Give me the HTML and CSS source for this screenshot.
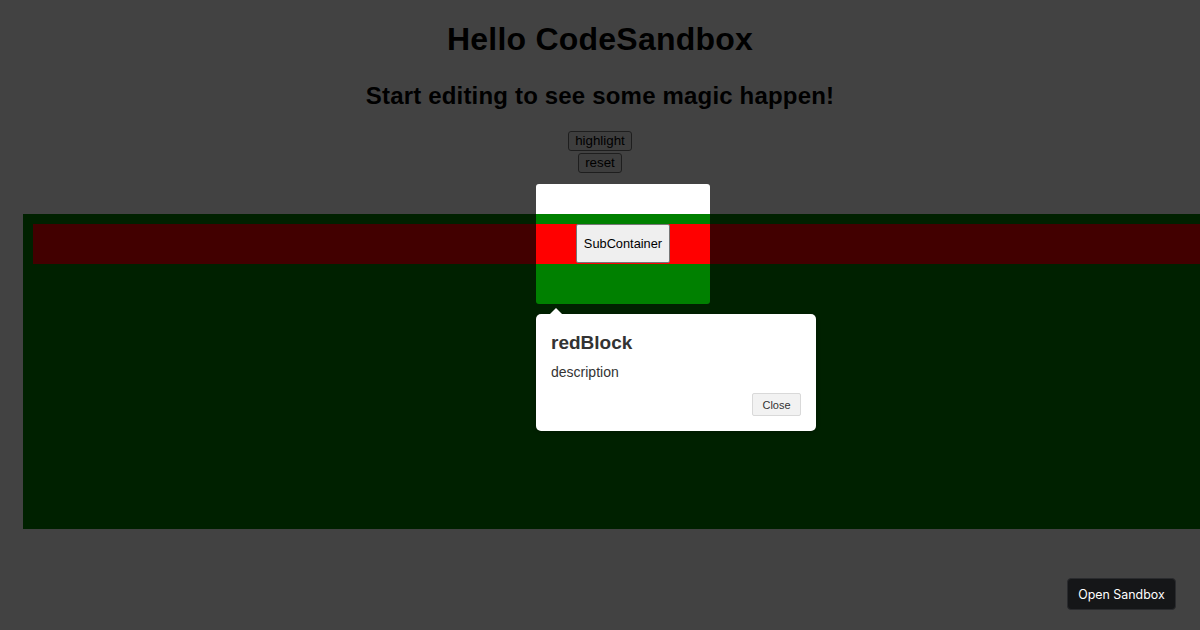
FILE: index.html
```html
<!DOCTYPE html>
<html>
<head>
<meta charset="utf-8">
<title>CodeSandbox</title>
<link rel="stylesheet" href="styles.css">
</head>
<body>
<div class="app">
  <h1 class="title">Hello CodeSandbox</h1>
  <h2 class="subtitle">Start editing to see some magic happen!</h2>
  <div class="controls">
    <button class="ctrl-btn">highlight</button>
    <button class="ctrl-btn">reset</button>
  </div>
  <div class="container">
    <div class="red-block">
      <button class="sub-btn">SubContainer</button>
    </div>
  </div>
</div>

<div class="spotlight"></div>

<div class="tooltip">
  <div class="tooltip-title">redBlock</div>
  <div class="tooltip-desc">description</div>
  <div class="tooltip-footer">
    <button class="close-btn">Close</button>
  </div>
</div>

<a class="open-sandbox">Open Sandbox</a>
</body>
</html>
```

FILE: styles.css
```css
html, body {
  overflow: hidden;
}
body {
  margin: 0;
  background: #ffffff;
  font-family: "Liberation Sans", Arial, sans-serif;
  color: #000;
}
.app {
  text-align: center;
}
.title {
  margin: 21.44px 0 0;
  font-size: 32px;
  line-height: 37px;
  font-weight: bold;
  letter-spacing: 0.22px;
}
.subtitle {
  margin: 23.5px 0 0;
  font-size: 24px;
  line-height: 28px;
  font-weight: bold;
  letter-spacing: 0.18px;
}
.controls {
  margin-top: 21px;
  display: flex;
  flex-direction: column;
  align-items: center;
  gap: 2px;
}
.ctrl-btn {
  font-family: "Liberation Sans", Arial, sans-serif;
  font-size: 13.33px;
  line-height: 16px;
  height: 20px;
  padding: 1px 6px;
  border: 1px solid #767676;
  border-radius: 3px;
  background: #efefef;
  color: #000;
}
.container {
  box-sizing: border-box;
  margin: 41px 0 0 23px;
  width: 1200px;
  height: 315px;
  padding: 10px;
  background: #008000;
}
.red-block {
  height: 40px;
  background: #ff0000;
  display: flex;
  justify-content: center;
  align-items: flex-start;
}
.sub-btn {
  box-sizing: border-box;
  height: 39px;
  width: 94px;
  padding: 0;
  font-family: "Liberation Sans", Arial, sans-serif;
  font-size: 12.8px;
  border: 1px solid #767676;
  border-radius: 2px;
  background: #efefef;
  color: #000;
}
.spotlight {
  position: absolute;
  left: 536px;
  top: 184px;
  width: 174px;
  height: 120px;
  border-radius: 3px;
  box-shadow: 0 0 0 3000px rgba(0, 0, 0, 0.74);
  z-index: 10;
  pointer-events: none;
}
.tooltip {
  position: absolute;
  left: 536px;
  top: 314px;
  width: 280px;
  box-sizing: border-box;
  padding: 15px;
  background: #ffffff;
  border-radius: 5px;
  box-shadow: 0 1px 4px rgba(0, 0, 0, 0.3);
  z-index: 11;
  color: #333;
  font-family: "Liberation Sans", Arial, sans-serif;
}
.tooltip::before {
  content: "";
  position: absolute;
  top: -6px;
  left: 14px;
  border-left: 6px solid transparent;
  border-right: 6px solid transparent;
  border-bottom: 6px solid #ffffff;
}
.tooltip-title {
  font-size: 19px;
  line-height: 28px;
  font-weight: bold;
  color: #333;
}
.tooltip-desc {
  margin-top: 5px;
  font-size: 14px;
  line-height: 20px;
  color: #333;
}
.tooltip-footer {
  margin-top: 11px;
  display: flex;
  justify-content: flex-end;
}
.close-btn {
  box-sizing: border-box;
  height: 23px;
  width: 49px;
  padding: 0;
  font-family: "Liberation Sans", Arial, sans-serif;
  font-size: 11px;
  color: #333;
  background: #f2f2f2;
  border: 1px solid #d9d9d9;
  border-radius: 2px;
}
.open-sandbox {
  position: fixed;
  right: 24px;
  bottom: 20px;
  box-sizing: border-box;
  width: 109px;
  height: 32px;
  display: flex;
  align-items: center;
  justify-content: center;
  background: #151618;
  border: 1px solid #2a2b2e;
  border-radius: 4px;
  color: #ffffff;
  font-family: Inter, "Liberation Sans", sans-serif;
  font-size: 12.4px;
  z-index: 12;
}
```
